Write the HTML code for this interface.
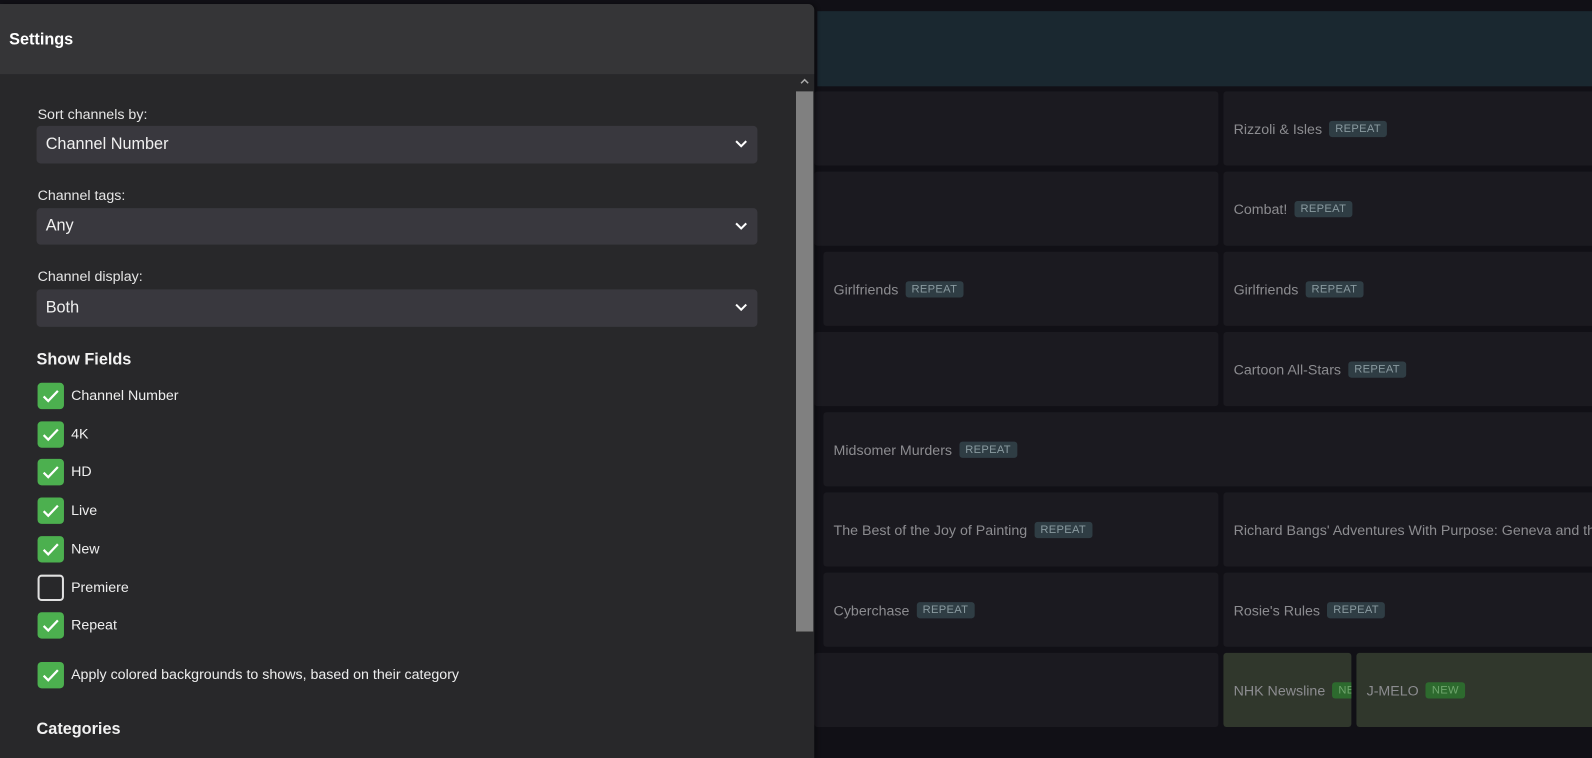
<!DOCTYPE html>
<html><head><style>
*{box-sizing:border-box;margin:0;padding:0}
html,body{width:1592px;height:747px;background:#111016;overflow:hidden}
#w{position:absolute;left:0;top:0;width:1592px;height:740px;transform:scale(1.0153);transform-origin:0 0;font-family:"Liberation Sans",sans-serif}
.a{position:absolute}
.cell{position:absolute;background:#1b1a20;border-radius:3px;color:#8c8c90;font-size:14px;display:flex;align-items:center;padding-left:10px;white-space:nowrap;overflow:hidden}
.tag{display:inline-block;background:#2f3d44;color:#8a9aa0;font-size:11px;padding:2px 6px;border-radius:3px;margin-left:7px;letter-spacing:.3px}
.grn{background:#30372c}
.grn .tag{background:#2d6a2e;color:#6ea56c}
.lbl{position:absolute;left:37px;color:#e6e6e6;font-size:14px}
.sel{position:absolute;left:36px;width:710px;height:37px;background:#39383e;border-radius:4px;color:#f0f0f0;font-size:16px;padding-left:9px;line-height:37px}
.sel svg{position:absolute;right:10px;top:14px}
.cb{position:absolute;left:37px;width:26px;height:26px;background:#4cb04f;border-radius:4px}
.cb.off{background:none;border:2px solid #e0e0e0}
.cbl{position:absolute;left:70px;color:#eee;font-size:14px}
h3{position:absolute;left:36px;color:#f2f2f2;font-size:16px;font-weight:bold}
</style></head><body><div id="w">
<div class="a" style="left:805px;top:11px;width:787px;height:74px;background:#1a2830"></div>
<div class="cell" style="left:802px;top:90px;width:398px;height:73px"></div>
<div class="cell" style="left:1205px;top:90px;width:387px;height:73px">Rizzoli &amp; Isles<span class="tag">REPEAT</span></div>
<div class="cell" style="left:802px;top:169px;width:398px;height:73px"></div>
<div class="cell" style="left:1205px;top:169px;width:387px;height:73px">Combat!<span class="tag">REPEAT</span></div>
<div class="cell" style="left:811px;top:248px;width:389px;height:73px">Girlfriends<span class="tag">REPEAT</span></div>
<div class="cell" style="left:1205px;top:248px;width:387px;height:73px">Girlfriends<span class="tag">REPEAT</span></div>
<div class="cell" style="left:802px;top:327px;width:398px;height:73px"></div>
<div class="cell" style="left:1205px;top:327px;width:387px;height:73px">Cartoon All-Stars<span class="tag">REPEAT</span></div>
<div class="cell" style="left:811px;top:406px;width:781px;height:73px">Midsomer Murders<span class="tag">REPEAT</span></div>
<div class="cell" style="left:811px;top:485px;width:389px;height:73px">The Best of the Joy of Painting<span class="tag">REPEAT</span></div>
<div class="cell" style="left:1205px;top:485px;width:387px;height:73px">Richard Bangs' Adventures With Purpose: Geneva and the</div>
<div class="cell" style="left:811px;top:564px;width:389px;height:73px">Cyberchase<span class="tag">REPEAT</span></div>
<div class="cell" style="left:1205px;top:564px;width:387px;height:73px">Rosie's Rules<span class="tag">REPEAT</span></div>
<div class="cell" style="left:802px;top:643px;width:398px;height:73px"></div>
<div class="cell grn" style="left:1205px;top:643px;width:126px;height:73px">NHK Newsline<span class="tag">NEW</span></div>
<div class="cell grn" style="left:1336px;top:643px;width:256px;height:73px">J-MELO<span class="tag">NEW</span></div>

<div class="a" style="left:0;top:4px;width:802px;height:743px;background:#28282a;border-top-right-radius:6px;overflow:hidden;box-shadow:2px 0 4px rgba(0,0,0,.4)">
 <div class="a" style="left:0;top:0;width:802px;height:69px;background:#353537"></div>
 <div class="a" style="left:9px;top:27px;color:#fff;font-size:16px;font-weight:bold">Settings</div>
 <div class="a" style="left:784px;top:86px;width:17px;height:532px;background:#808080"></div>
 <svg class="a" style="left:788px;top:73px" width="9" height="6"><path d="M1 5l3.5-3.5L8 5" stroke="#aaa" stroke-width="1.5" fill="none"/></svg>
</div>
<div class="lbl" style="top:104px">Sort channels by:</div>
<div class="sel" style="top:124px">Channel Number<svg width="12" height="8"><path d="M1 1l5 5 5-5" stroke="#fff" stroke-width="2" fill="none"/></svg></div>
<div class="lbl" style="top:184px">Channel tags:</div>
<div class="sel" style="top:205px;height:36px;line-height:36px">Any<svg width="12" height="8"><path d="M1 1l5 5 5-5" stroke="#fff" stroke-width="2" fill="none"/></svg></div>
<div class="lbl" style="top:264px">Channel display:</div>
<div class="sel" style="top:285px">Both<svg width="12" height="8"><path d="M1 1l5 5 5-5" stroke="#fff" stroke-width="2" fill="none"/></svg></div>
<h3 style="top:346px">Show Fields</h3>
<div id="cbs"></div>
<script>
var items=[["Channel Number",390,1],["4K",428,1],["HD",465,1],["Live",503,1],["New",541,1],["Premiere",579,0],["Repeat",616,1],["Apply colored backgrounds to shows, based on their category",665,1]];
var h="";items.forEach(function(i){h+='<div class="cb'+(i[2]?'':' off')+'" style="top:'+(i[1]-13)+'px">'+(i[2]?'<svg width="26" height="26"><path d="M6 13.5l4.5 4.5 9.5-10" stroke="#fff" stroke-width="2.2" fill="none"/></svg>':'')+'</div><div class="cbl" style="top:'+(i[1]-9)+'px">'+i[0]+'</div>';});
document.getElementById("cbs").innerHTML=h;
</script>
<h3 style="top:710px">Categories</h3>
</div></body></html>
